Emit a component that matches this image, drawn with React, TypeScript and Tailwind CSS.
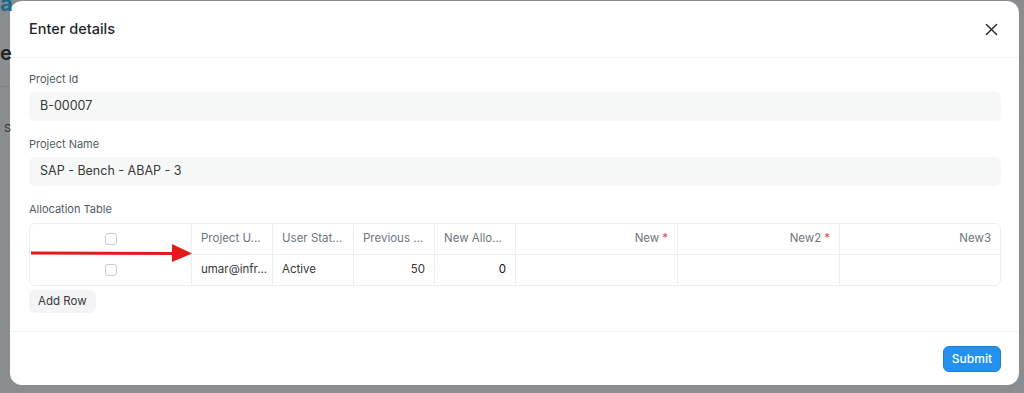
import React from 'react';

const font = { fontFamily: 'Inter, "Noto Sans", sans-serif' };

function Checkbox() {
  return <div className="w-[12px] h-[12px] rounded-[3px] border border-[#c7ccd1] bg-white" />;
}

function Req() {
  return <span className="text-[#e24c4c] ml-[3px]">*</span>;
}

export default function App() {
  const cols = [
    { label: '', w: 'w-[161px]', align: 'center' },
    { label: 'Project U...', w: 'w-[81px]', align: 'left' },
    { label: 'User Stat...', w: 'w-[81px]', align: 'left' },
    { label: 'Previous ...', w: 'w-[81px]', align: 'left' },
    { label: 'New Allo...', w: 'w-[81px]', align: 'left' },
    { label: 'New', w: 'w-[162px]', align: 'right', req: true },
    { label: 'New2', w: 'w-[162px]', align: 'right', req: true },
    { label: 'New3', w: 'flex-1', align: 'right' },
  ];

  return (
    <div className="w-[1024px] h-[393px] bg-[#8a8d8f] overflow-hidden relative" style={font}>
      {/* dimmed page behind */}
      <div className="absolute left-0 top-0 text-[#1d6a8a] text-[22px] font-bold leading-none -mt-[8px]">a</div>
      <div className="absolute left-0 top-[38px] text-[#222] text-[20px] font-semibold">e</div>
      <div className="absolute left-0 top-[86px] w-[10px] h-px bg-[#7d8082]" />
      <div className="absolute left-[4px] top-[120px] text-[#333] text-[11px]">S</div>

      <div className="ml-[10px] mt-[1px] w-[1009px] h-[384px] bg-white rounded-[12px] flex flex-col">
        {/* Header */}
        <div className="h-[57px] shrink-0 px-[19px] flex items-center justify-between border-b border-[#f1f2f3]">
          <div className="text-[14.5px] text-[#1f272e] font-medium">Enter details</div>
          <svg width="13" height="13" viewBox="0 0 14 14" className="mr-[2px]">
            <path d="M1.5 1.5 L12.5 12.5 M12.5 1.5 L1.5 12.5" stroke="#1f272e" strokeWidth="1.5" strokeLinecap="round" />
          </svg>
        </div>

        {/* Body */}
        <div className="flex-1 px-[19px] pt-[14px] pr-[18px]">
          <div className="text-[11px] text-[#525a61] mb-[6px] leading-[14px]">Project Id</div>
          <div className="h-[29px] rounded-[6px] bg-[#f6f7f7] flex items-center px-[11px] text-[12.5px] text-[#383838]">B-00007</div>

          <div className="text-[11px] text-[#525a61] mt-[16px] mb-[6px] leading-[14px]">Project Name</div>
          <div className="h-[29px] rounded-[6px] bg-[#f6f7f7] flex items-center px-[11px] text-[12.5px] text-[#383838]">SAP - Bench - ABAP - 3</div>

          <div className="text-[11px] text-[#525a61] mt-[16px] mb-[7px] leading-[14px]">Allocation Table</div>
          <div className="relative w-[972px] rounded-[6px] border border-[#ebeef0] text-[11.5px]">
            <div className="flex h-[31px] border-b border-[#ebeef0]">
              {cols.map((c, i) => (
                <div
                  key={i}
                  className={`${c.w} shrink-0 flex items-center px-[9px] text-[#6c7680] ${i > 0 ? 'border-l border-[#ebeef0]' : ''} ${c.align === 'center' ? 'justify-center' : c.align === 'right' ? 'justify-end' : 'justify-start'}`}
                >
                  {i === 0 ? <Checkbox /> : c.label}
                  {c.req && <Req />}
                </div>
              ))}
            </div>
            <div className="flex h-[30px] text-[#383838]">
              <div className="w-[161px] shrink-0 flex items-center justify-center"><Checkbox /></div>
              <div className="w-[81px] shrink-0 flex items-center px-[9px] border-l border-[#ebeef0]">umar@infr...</div>
              <div className="w-[81px] shrink-0 flex items-center px-[9px] border-l border-[#ebeef0]">Active</div>
              <div className="w-[81px] shrink-0 flex items-center justify-end px-[9px] border-l border-[#ebeef0]">50</div>
              <div className="w-[81px] shrink-0 flex items-center justify-end px-[9px] border-l border-[#ebeef0] text-[#111]">0</div>
              <div className="w-[162px] shrink-0 border-l border-[#ebeef0]" />
              <div className="w-[162px] shrink-0 border-l border-[#ebeef0]" />
              <div className="flex-1 border-l border-[#ebeef0]" />
            </div>
            {/* annotation arrow */}
            <svg className="absolute left-[0px] top-[19px]" width="164" height="20" viewBox="0 0 164 20">
              <path d="M1 8.5 L144 9 L144 12 L1 11.5 Z" fill="#e31b1b" />
              <path d="M142 1 L162 10.5 L142 19 Z" fill="#e31b1b" />
            </svg>
          </div>

          <button className="mt-[4px] h-[23px] px-[9px] rounded-[6px] bg-[#f3f4f5] text-[11.5px] text-[#383838]">Add Row</button>
        </div>

        {/* Footer */}
        <div className="h-[54px] shrink-0 border-t border-[#f1f2f3] flex items-center justify-end px-[18px]">
          <button className="h-[26px] px-[8px] rounded-[6px] bg-[#2490ef] border border-[#1f7fd6] text-white text-[12px] font-medium">Submit</button>
        </div>
      </div>
    </div>
  );
}
